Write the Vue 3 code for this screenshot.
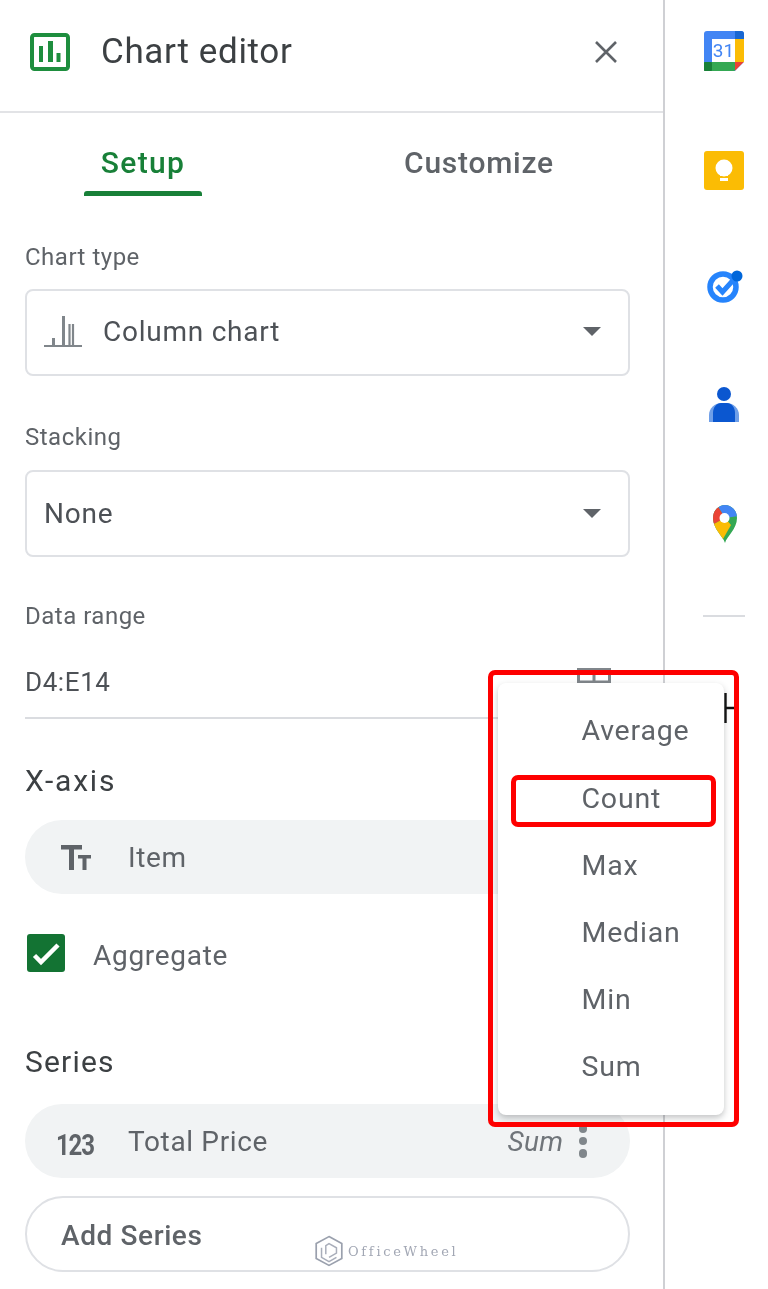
<script setup>
const menuItems = ['Average', 'Count', 'Max', 'Median', 'Min', 'Sum']
</script>

<template>
  <div class="app">
    <main class="panel">
      <header class="head">
        <svg class="logo" viewBox="0 0 40 38" width="40" height="38">
          <rect x="2" y="2" width="36" height="34" rx="2.5" fill="none" stroke="#1e8e3e" stroke-width="4" />
          <rect x="9" y="13" width="4" height="16" fill="#1e8e3e" />
          <rect x="18" y="8" width="5" height="21" fill="#1e8e3e" />
          <rect x="26.5" y="20" width="4" height="9" fill="#1e8e3e" />
        </svg>
        <h1 class="title">Chart editor</h1>
        <svg class="close" viewBox="0 0 24 24" width="24" height="24">
          <path d="M2 2 L22 22 M22 2 L2 22" stroke="#5f6368" stroke-width="2.6" fill="none" />
        </svg>
      </header>

      <nav class="tabs">
        <div class="tab active"><span>Setup</span><i class="underline"></i></div>
        <div class="tab other"><span>Customize</span></div>
      </nav>

      <section class="body">
        <div class="label first">Chart type</div>
        <div class="select firstselect">
          <svg class="bars" viewBox="0 0 38 31" width="38" height="31">
            <path d="M0 30H38" stroke="#80868b" stroke-width="2" />
            <path d="M9.5 30V22M19.5 30V0" stroke="#80868b" stroke-width="3" />
            <path d="M25.5 30V8M29 30V8" stroke="#80868b" stroke-width="2.2" />
          </svg>
          <span class="val">Column chart</span>
          <i class="caret"></i>
        </div>

        <div class="label second">Stacking</div>
        <div class="select secondselect">
          <span class="val">None</span>
          <i class="caret"></i>
        </div>

        <div class="label third">Data range</div>
        <div class="range">D4:E14</div>

        <h2 class="section xaxis">X-axis</h2>
        <div class="pill xpill">
          <svg class="tt" viewBox="0 0 30 25" width="30" height="25">
            <path d="M0 0H21V4.5H13V25H8V4.5H0Z" fill="#5f6368" />
            <path d="M17 10H30V13.5H25.5V25H21.5V13.5H17Z" fill="#5f6368" />
          </svg>
          <span class="pilltext">Item</span>
        </div>

        <div class="aggregate">
          <span class="check">
            <svg viewBox="0 0 38 38" width="38" height="38">
              <path d="M7.5 21.5 L14 28 L31 11" fill="none" stroke="#fff" stroke-width="4.5" />
            </svg>
          </span>
          <span class="aggtext">Aggregate</span>
        </div>

        <h2 class="section series">Series</h2>
        <div class="pill seriespill">
          <span class="num">123</span>
          <span class="pilltext">Total Price</span>
          <em class="sum">Sum</em>
          <span class="dots"><i></i><i></i><i></i></span>
        </div>

        <div class="add">
          <span>Add Series</span>
        </div>
      </section>
    </main>

    <aside class="rail">
      <svg class="ic cal" viewBox="0 0 40 40" width="40" height="40">
        <rect x="0" y="0" width="40" height="40" rx="3" fill="#4285f4" />
        <rect x="8" y="8" width="23" height="23" fill="#fff" />
        <rect x="31" y="8" width="9" height="23" fill="#fbbc04" />
        <rect x="0" y="31" width="31" height="9" rx="1" fill="#34a853" />
        <rect x="0" y="31" width="8" height="9" rx="1" fill="#188038" />
        <path d="M31 0H37A3 3 0 0 1 40 3V8H31Z" fill="#1967d2" />
        <path d="M31 31H40L31 40Z" fill="#ea4335" />
        <path d="M40 31V40H31Z" fill="#fff" />
        <text x="19.5" y="26" text-anchor="middle" class="caltext">31</text>
      </svg>
      <svg class="ic keep" viewBox="0 0 40 40" width="40" height="40">
        <rect x="0" y="0" width="40" height="39" rx="3" fill="#fbbc04" />
        <circle cx="20" cy="17" r="8.5" fill="#fff" />
        <rect x="16" y="22" width="8" height="3" fill="#fff" />
        <rect x="16" y="27" width="8" height="3" fill="#fff" />
      </svg>
      <svg class="ic tasks" viewBox="0 0 38 38" width="38" height="38">
        <circle cx="18" cy="19" r="13" fill="none" stroke="#2684fc" stroke-width="5.5" />
        <path d="M12 18 L17.5 24 L31 9" fill="none" stroke="#2684fc" stroke-width="5" />
        <circle cx="32" cy="8" r="5.5" fill="#0066da" />
      </svg>
      <svg class="ic contacts" viewBox="0 0 32 36" width="32" height="36">
        <circle cx="16" cy="7" r="7" fill="#0b57d0" />
        <path d="M1 35 V28 C1 21 7 16 13 16 H19 C25 16 31 21 31 28 V35Z" fill="#6f9fe8" />
        <path d="M5 35 V26 C5 20 9 16 13 16 H19 C23 16 27 20 27 26 V35Z" fill="#0b57d0" />
      </svg>
      <svg class="ic maps" viewBox="0 0 26 38" width="26" height="38">
        <clipPath id="pin">
          <path d="M13 38 C11 31 1 24 1 13 A12 13 0 0 1 25 13 C25 24 15 31 13 38Z" />
        </clipPath>
        <g clip-path="url(#pin)">
          <rect width="26" height="38" fill="#34a853" />
          <path d="M5 0H26V11L13 13Z" fill="#4285f4" />
          <path d="M0 0H5L13 13L0 20Z" fill="#ea4335" />
          <path d="M0 20L13 13L19 20L11 34H0Z" fill="#fbbc04" />
        </g>
        <circle cx="12.5" cy="13" r="5" fill="#fff" />
      </svg>
      <div class="divider"></div>
    </aside>

    <svg class="gridicon" viewBox="0 0 34 16" width="34" height="16">
      <path d="M1.5 16V1.5H32.5V16M17 1.5V16M1.5 14H32.5" fill="none" stroke="#80868b" stroke-width="3" />
    </svg>
    <svg class="cursor" viewBox="0 0 14 30" width="14" height="30">
      <path d="M2.5 0V30M2.5 15H14" stroke="#111" stroke-width="2.4" fill="none" />
    </svg>

    <div class="menu">
      <div v-for="item in menuItems" :key="item" class="menuitem">{{ item }}</div>
    </div>
    <div class="mark outer"></div>
    <div class="mark inner"></div>

    <div class="watermark">
      <svg viewBox="0 0 30 30" width="32" height="32">
        <path d="M15 1.5 L27 8 V22 L15 28.5 L3 22 V8Z" fill="none" stroke="#9aa0ad" stroke-width="1.6" />
        <path d="M8 12 V21 L15 25 L22 21 M12 18 V10 L15 8 L22 12 V17 L15 21" fill="none" stroke="#a9aeba" stroke-width="1.4" />
      </svg>
      <span>OfficeWheel</span>
    </div>
  </div>
</template>

<style>
html, body { margin: 0; background: #fff; }
</style>

<style scoped>
.app {
  position: relative;
  display: flex;
  width: 768px;
  height: 1289px;
  overflow: hidden;
  background: #fff;
  font-family: Roboto, "Liberation Sans", sans-serif;
  color: #5f6368;
  filter: blur(0.45px);
}
.panel {
  width: 663px;
  height: 1289px;
  flex: none;
  box-sizing: content-box;
  border-right: 2px solid #cfd0d4;
}
.head {
  display: flex;
  align-items: center;
  height: 103px;
  box-sizing: content-box;
  border-bottom: 2px solid #e2e3e6;
  padding: 0 45px 8px 30px;
}
.logo { flex: none; }
.title {
  flex: 1;
  margin: 0 0 0 31px;
  font-size: 35px;
  line-height: 40px;
  font-weight: 400;
  letter-spacing: 0.65px;
  color: #3c4043;
}
.close { flex: none; }
.tabs {
  display: flex;
  height: 83px;
  padding: 0 0 0 84px;
}
.tab {
  position: relative;
  font-size: 30px;
  line-height: 34px;
  padding-top: 33px;
  font-weight: 500;
  letter-spacing: 0.75px;
  text-align: center;
}
.tab.active {
  width: 118px;
  letter-spacing: 1.3px;
  color: #188038;
}
.tab.other {
  margin-left: 120px;
  width: 314px;
  color: #5f6368;
}
.underline {
  position: absolute;
  left: 0;
  right: 0;
  bottom: 0;
  height: 5px;
  border-radius: 3px 3px 0 0;
  background: #188038;
}
.body { padding: 0 33px 0 25px; }
.label {
  font-size: 24px;
  line-height: 28px;
  letter-spacing: 0.5px;
  color: #5f6368;
}
.label.first { margin-top: 47px; }
.label.second { margin-top: 47px; }
.label.third { margin-top: 45px; }
.select {
  display: flex;
  align-items: center;
  box-sizing: border-box;
  height: 87px;
  margin-top: 19px;
  padding: 0 27px 2px 17px;
  border: 2px solid #dfe1e5;
  border-radius: 8px;
}
.firstselect { margin-top: 18px; }
.secondselect { padding-bottom: 0; }
.bars { flex: none; margin-right: 21px; }
.val {
  flex: 1;
  font-size: 28px;
  line-height: 34px;
  letter-spacing: 0.75px;
  color: #4d5156;
}
.caret {
  flex: none;
  width: 0;
  height: 0;
  border-left: 9.5px solid transparent;
  border-right: 9.5px solid transparent;
  border-top: 9.5px solid #5f6368;
}
.range {
  height: 54px;
  margin-top: 35px;
  width: 480px;
  box-sizing: border-box;
  border-bottom: 2px solid #dadce0;
  font-size: 26px;
  line-height: 34px;
  letter-spacing: 0.6px;
  color: #4d5156;
}
.section {
  margin: 0;
  font-size: 30px;
  line-height: 34px;
  font-weight: 400;
  letter-spacing: 1.2px;
  color: #3c4043;
}
.xaxis { margin-top: 45px; letter-spacing: 1.8px; }
.series { margin-top: 73px; }
.pill {
  display: flex;
  align-items: center;
  box-sizing: border-box;
  height: 74px;
  padding: 0 34px 0 36px;
  border-radius: 37px;
  background: #f1f3f4;
}
.xpill { margin-top: 22px; }
.seriespill { margin-top: 25px; }
.tt { flex: none; margin-right: 37px; }
.pilltext {
  padding-top: 2px;
  font-size: 28px;
  line-height: 34px;
  letter-spacing: 0.65px;
  color: #5f6368;
}
.aggregate {
  display: flex;
  align-items: center;
  margin-top: 40px;
  padding-left: 2px;
  height: 38px;
}
.check {
  display: block;
  flex: none;
  width: 38px;
  height: 38px;
  margin-right: 28px;
  border-radius: 3px;
  background: #137333;
}
.check svg { display: block; }
.aggtext {
  padding-top: 5px;
  font-size: 28px;
  line-height: 34px;
  letter-spacing: 0.7px;
  color: #5f6368;
}
.num {
  flex: none;
  width: 38px;
  margin-left: -5px;
  margin-right: 34px;
  font-size: 30px;
  font-weight: 700;
  letter-spacing: -1.5px;
  color: #5f6368;
  transform: translateY(3px) scaleX(0.8);
  transform-origin: left center;
}
.sum {
  margin-left: auto;
  font-size: 28px;
  font-style: italic;
  color: #70757a;
  letter-spacing: 0.4px;
}
.dots {
  display: flex;
  flex-direction: column;
  gap: 4px;
  margin-left: 15px;
  margin-right: 9px;
}
.dots i {
  display: block;
  width: 8.5px;
  height: 8.5px;
  border-radius: 50%;
  background: #80868b;
}
.add {
  display: flex;
  align-items: center;
  box-sizing: border-box;
  height: 76px;
  margin-top: 18px;
  padding: 2px 0 0 34px;
  border: 2px solid #dfe1e5;
  border-radius: 38px;
  font-size: 28px;
  font-weight: 500;
  letter-spacing: 0.6px;
  color: #5f6368;
}
.rail {
  display: flex;
  flex-direction: column;
  align-items: center;
  flex: 1;
  padding-top: 31px;
  box-sizing: border-box;
  padding-left: 14px;
}
.ic { display: block; flex: none; }
.keep { margin-top: 80px; }
.tasks { margin-top: 77px; }
.contacts { margin-top: 81px; }
.maps { margin-top: 82px; margin-left: 2px; }
.caltext {
  font-family: Roboto, sans-serif;
  font-size: 19px;
  font-weight: 400;
  fill: #4285f4;
}
.divider {
  width: 42px;
  height: 2px;
  margin-top: 72px;
  background: #dadce0;
}
.gridicon {
  position: absolute;
  left: 577px;
  top: 668px;
}
.cursor {
  position: absolute;
  left: 723px;
  top: 693px;
}
.menu {
  position: absolute;
  left: 498px;
  top: 683px;
  width: 226px;
  height: 432px;
  box-sizing: border-box;
  padding-top: 14.4px;
  border-radius: 8px;
  background: #fff;
  box-shadow: 0 3px 6px rgba(60, 64, 67, 0.3);
}
.menuitem {
  height: 67.2px;
  line-height: 67.2px;
  padding-left: 83.5px;
  font-size: 28.5px;
  letter-spacing: 0.8px;
  color: #5f6368;
}
.mark {
  position: absolute;
  box-sizing: border-box;
  border: 5px solid #fe0000;
  border-radius: 7px;
}
.mark.outer {
  left: 488px;
  top: 670px;
  width: 251px;
  height: 457px;
}
.mark.inner {
  left: 511px;
  top: 775px;
  width: 205px;
  height: 52px;
}
.watermark {
  position: absolute;
  left: 313px;
  top: 1235px;
  display: flex;
  align-items: center;
  gap: 3px;
  font-family: "DejaVu Serif", serif;
  font-size: 13px;
  letter-spacing: 2.7px;
  color: #a2a7b4;
}
.watermark svg { display: block; }
</style>
